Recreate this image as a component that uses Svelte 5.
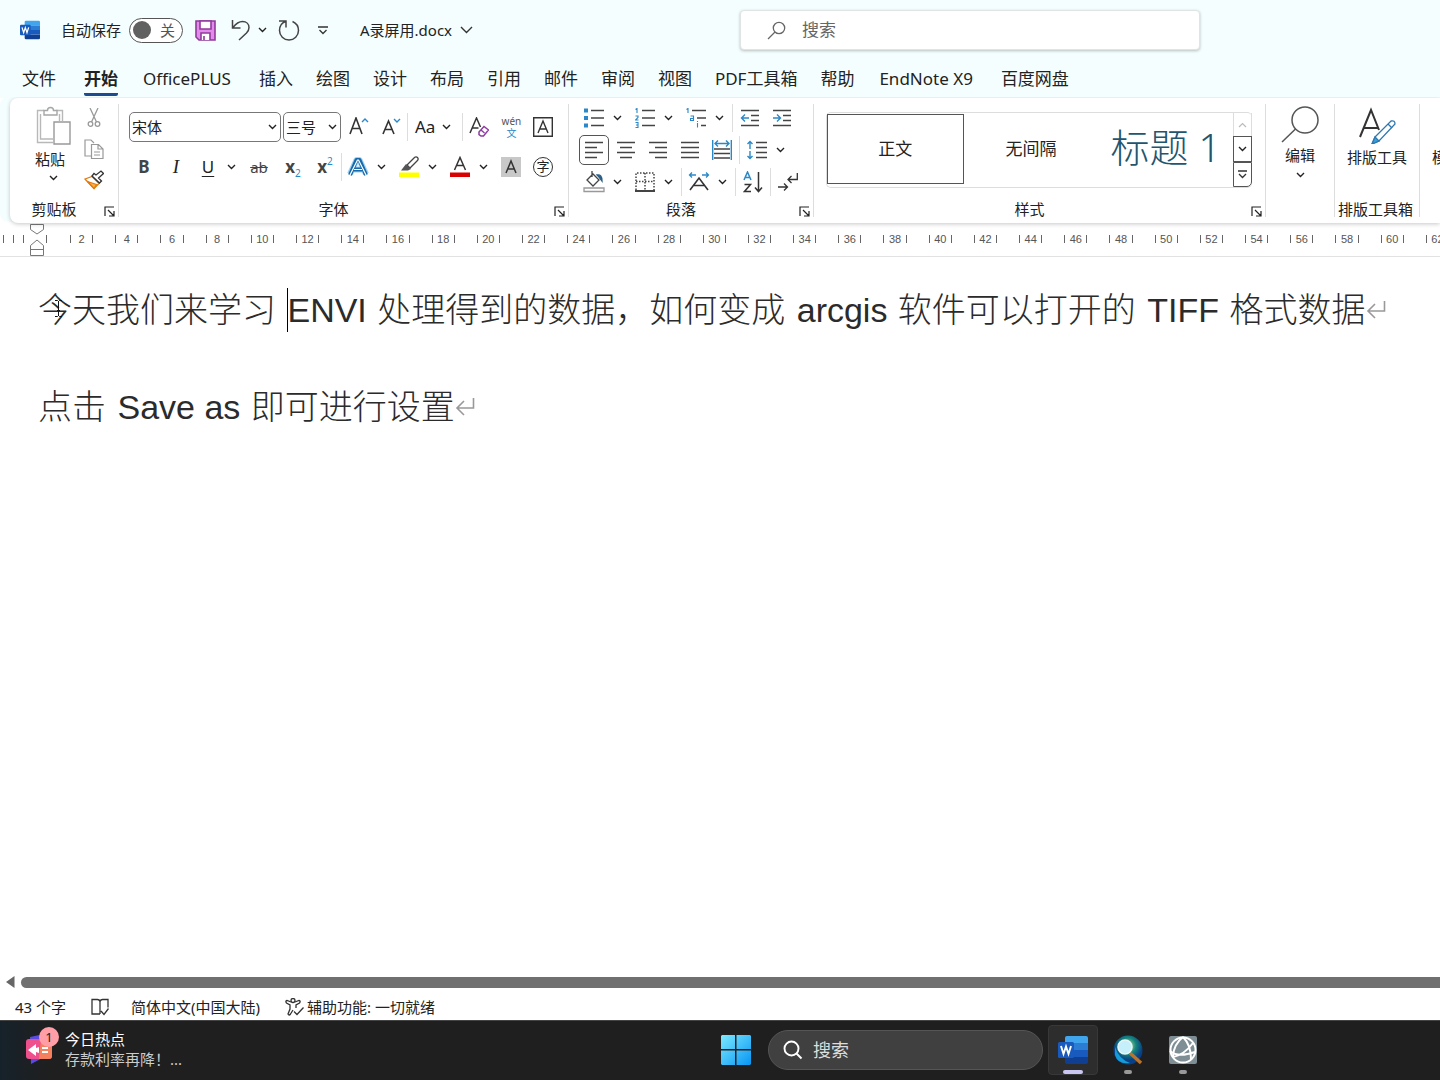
<script lang="ts">
	interface Tab {
		label: string;
		active?: boolean;
		latin?: boolean;
	}

	const tabs: Tab[] = [
		{ label: '文件' },
		{ label: '开始', active: true },
		{ label: 'OfficePLUS', latin: true },
		{ label: '插入' },
		{ label: '绘图' },
		{ label: '设计' },
		{ label: '布局' },
		{ label: '引用' },
		{ label: '邮件' },
		{ label: '审阅' },
		{ label: '视图' },
		{ label: 'PDF工具箱' },
		{ label: '帮助' },
		{ label: 'EndNote X9', latin: true },
		{ label: '百度网盘' }
	];

	const rulerMarks = Array.from({ length: 31 }, (_, i) => (i + 1) * 2);

	let autoSave = $state(false);
	let fontName = $state('宋体');
	let fontSize = $state('三号');
</script>

{#snippet chevron()}
	<svg class="chev" width="9" height="6" viewBox="0 0 9 6"><path d="M1 1l3.5 3.5L8 1" fill="none" stroke="currentColor" stroke-width="1.4" /></svg>
{/snippet}

{#snippet more(label: string)}
	<button type="button" class="more" aria-label={label}>{@render chevron()}</button>
{/snippet}

{#snippet launcher(label: string)}
	<button type="button" class="launcher" aria-label={label}>
		<svg width="11" height="11" viewBox="0 0 11 11" fill="none" stroke="#222" stroke-width="1.2"><path d="M1 10V1h9M4 4l5.500 5.500M10 5v5H5" /></svg>
	</button>
{/snippet}

{#snippet wordLogo(size: number)}
	<svg width={size} height={size} viewBox="0 0 30 30">
		<path d="M9 1h19q2 0 2 2v5H7V3q0-2 2-2z" fill="#41a5ee" />
		<path d="M7 8h23v7H7z" fill="#2b7cd3" />
		<path d="M7 15h23v7H7z" fill="#185abd" />
		<path d="M7 22h23v5q0 2-2 2H9q-2 0-2-2z" fill="#103f91" />
		<rect y="7" width="16" height="16" rx="1.500" fill="#185abd" />
		<path d="M3 11l2.500 8L8 11.500l2.500 7.500L13 11" fill="none" stroke="#fff" stroke-width="1.900" />
	</svg>
{/snippet}

<div class="app">
	<header class="titlebar">
		<span class="logo">{@render wordLogo(20)}</span>
		<label class="autosave">
			<span>自动保存</span>
			<input type="checkbox" bind:checked={autoSave} />
			<span class="switch" class:on={autoSave}><i></i>关</span>
		</label>
		<button type="button" class="save" aria-label="保存">
			<svg width="21" height="21" viewBox="0 0 21 21" fill="#e38bea" stroke="#8f3a9c" stroke-width="1.600"><path d="M1 1h19v19H4l-3-3z" /><path d="M5 1h11v8H5zM6 20v-7h9v7M9 16v4" fill="#fff" /></svg>
		</button>
		<button type="button" class="undo" aria-label="撤消">
			<svg width="20" height="21" viewBox="0 0 20 21" fill="none" stroke="#444" stroke-width="1.500"><path d="M1.500 0v8h8M2 7.500C5 3.500 8 1.500 11.500 1.500c4 0 6.500 2.500 6.500 6 0 2.500-1 4-2.500 5.500L8 20" /></svg>
		</button>
		{@render more('撤消选项')}
		<button type="button" class="redo" aria-label="重复">
			<svg width="22" height="22" viewBox="0 0 22 22" fill="none" stroke="#444" stroke-width="1.500"><path d="M1 2h7v6.500M7.500 2.500C3.500 4 1.500 7.500 1.500 11.500a9.500 9.500 0 0 0 19 0c0-4-2.500-7.500-6-9" /></svg>
		</button>
		<button type="button" class="customize" aria-label="自定义快速访问工具栏">
			<svg width="10" height="10" viewBox="0 0 10 10" fill="none" stroke="#333" stroke-width="1.300"><path d="M0 2h10M1.500 5L5 8.500 8.500 5" /></svg>
		</button>
		<button type="button" class="docname">
			A录屏用.docx
			<svg width="13" height="8" viewBox="0 0 13 8" fill="none" stroke="#333" stroke-width="1.400"><path d="M1 1l5.500 5.500L12 1" /></svg>
		</button>
		<label class="search">
			<svg width="19" height="19" viewBox="0 0 19 19" fill="none" stroke="#666" stroke-width="1.300"><circle cx="12" cy="7" r="5.700" /><path d="M8 11l-7 7" /></svg>
			<input type="text" placeholder="搜索" aria-label="搜索" />
		</label>
	</header>

	<nav class="tabs">
		{#each tabs as tab}
			<button type="button" class="tab" class:active={tab.active} class:wide={tab.latin}>{tab.label}</button>
		{/each}
	</nav>

	<div class="ribbon">
		<section class="group clipboard">
			<div class="body">
				<button type="button" class="paste">
					<svg width="36" height="40" viewBox="0 0 36 40" fill="none" stroke="#a6a6a6" stroke-width="1.400">
						<path d="M8 4.500H1.500v32H17M20 4.500h6.500V15M4.500 8v25H17M23.500 8v7" stroke="#b8b8b8" />
						<path d="M8 9V4.500h3.500a3 3 0 0 1 6 0H21V9z" fill="#fff" />
						<path d="M18 16h16v22H18z" fill="#fff" stroke="#999" />
					</svg>
					<span>粘贴</span>
					{@render chevron()}
				</button>
				<div class="stack">
					<button type="button" aria-label="剪切">
						<svg width="14" height="20" viewBox="0 0 14 20" fill="none" stroke="#999" stroke-width="1.300"><path d="M3 0l6.500 14M11 0L4.500 14" /><circle cx="3.500" cy="16" r="2.300" /><circle cx="10.500" cy="16" r="2.300" /></svg>
					</button>
					<button type="button" aria-label="复制">
						<svg width="20" height="20" viewBox="0 0 20 20" fill="#fff" stroke="#999" stroke-width="1.200"><path d="M7 17H1V1h6l3 3" /><path d="M7.500 5.500h7l4.500 4.500v9.500H7.500zM14 5.500V10h5M10 13h6M10 16h6" /></svg>
					</button>
					<button type="button" aria-label="格式刷">
						<svg width="20" height="20" viewBox="0 0 20 20" stroke-width="1.300"><path d="M1 9l7-2.500 7 7L10 18.500z" fill="#fff" stroke="#e07b12" /><path d="M3.500 11.500l9 3-2.500 4z" fill="#fbb040" stroke="#e07b12" /><path d="M8 6l7.500 7 2-2-3-3 5-4.500L17 1l-5 4-2-1.500z" fill="#fff" stroke="#333" /></svg>
					</button>
				</div>
			</div>
			<footer><span>剪贴板</span>{@render launcher('剪贴板')}</footer>
		</section>

		<section class="group font">
			<div class="body rows">
				<div class="row">
					<span class="combo name">
						<select bind:value={fontName} aria-label="字体"><option>宋体</option></select>
						{@render chevron()}
					</span>
					<span class="combo size">
						<select bind:value={fontSize} aria-label="字号"><option>三号</option></select>
						{@render chevron()}
					</span>
					<button type="button" class="cell" aria-label="增大字号">
						<svg width="20" height="20" viewBox="0 0 20 20" fill="none" stroke="#333" stroke-width="1.600"><path d="M1 17L7 1l6 16M3.500 11.500h7" /><path d="M13 5l3-3 3 3" stroke="#2b88c8" stroke-width="1.400" /></svg>
					</button>
					<button type="button" class="cell" aria-label="减小字号">
						<svg width="20" height="20" viewBox="0 0 20 20" fill="none" stroke="#333" stroke-width="1.600"><path d="M2 17L7.500 4 13 17M4 12.500h7" /><path d="M13 2l3 3 3-3" stroke="#2b88c8" stroke-width="1.400" /></svg>
					</button>
					<i class="sep"></i>
					<button type="button" class="case">Aa {@render chevron()}</button>
					<i class="sep"></i>
					<button type="button" class="cell" aria-label="清除所有格式">
						<svg width="20" height="20" viewBox="0 0 20 20" fill="none" stroke="#333" stroke-width="1.500"><path d="M1 16L7.500 1l4 9M3.500 11h6" /><path d="M10 15l5-5.500 4.500 3.500-5 6H12l-2-1.500zM12 13l3.500 3" stroke="#8d3da0" /></svg>
					</button>
					<button type="button" class="cell phonetic"><span>wén</span><small>文</small></button>
					<button type="button" class="cell" aria-label="字符边框">
						<svg width="20" height="20" viewBox="0 0 20 20" fill="none" stroke="#333" stroke-width="1.400"><path d="M.7.7h18.600v18.600H.7zM5 16l5-12 5 12M7 12h6" /></svg>
					</button>
				</div>
				<div class="row">
					<button type="button" class="cell bold">B</button>
					<button type="button" class="cell italic">I</button>
					<button type="button" class="cell underline">U</button>
					{@render more('下划线选项')}
					<i class="gap"></i>
					<button type="button" class="cell strike">ab</button>
					<button type="button" class="cell script">x<sub>2</sub></button>
					<button type="button" class="cell script">x<sup>2</sup></button>
					<i class="sep"></i>
					<button type="button" class="cell" aria-label="文本效果">
						<svg width="22" height="20" viewBox="0 0 22 20" fill="none" stroke-linejoin="round"><path d="M3 17L9.500 3h3L19 17M7 12.500h8" stroke="#9fd3f5" stroke-width="6" /><path d="M3 18L9.500 3h3L19 18M7 12.500h8" stroke="#1769aa" stroke-width="4" /><path d="M3 18L10.500 3h1L19 18M7 12.500h8" stroke="#fff" stroke-width="1.200" /></svg>
					</button>
					{@render more('文本效果选项')}
					<i class="gap"></i>
					<button type="button" class="cell" aria-label="突出显示">
						<svg width="20" height="22" viewBox="0 0 20 22"><path d="M0 16.500h20V21H0z" fill="#ff0" /><path d="M8 9l7-7q2-2 3.500-.500T18 5l-7 7z" fill="#fff" stroke="#444" stroke-width="1.300" /><path d="M7 8l5 5-3 1.500H2z" fill="#555" /></svg>
					</button>
					{@render more('突出显示颜色')}
					<i class="gap"></i>
					<button type="button" class="cell" aria-label="字体颜色">
						<svg width="20" height="22" viewBox="0 0 20 22"><path d="M0 16.500h20V21H0z" fill="#d80000" /><path d="M4.500 14L10 1.500 15.500 14M6.500 9.500h7" fill="none" stroke="#333" stroke-width="1.500" /></svg>
					</button>
					{@render more('字体颜色选项')}
					<i class="gap"></i>
					<button type="button" class="cell" aria-label="字符底纹">
						<svg width="20" height="20" viewBox="0 0 20 20"><path d="M0 0h20v20H0z" fill="#c8c8c8" /><path d="M5 16l5-12 5 12M7 12h6" fill="none" stroke="#333" stroke-width="1.500" /></svg>
					</button>
					<button type="button" class="cell"><span class="ring">字</span></button>
				</div>
			</div>
			<footer><span>字体</span>{@render launcher('字体')}</footer>
		</section>

		<section class="group paragraph">
			<div class="body rows">
				<div class="row">
					<button type="button" class="cell" aria-label="项目符号">
						<svg width="20" height="20" viewBox="0 0 20 20" stroke="#444" stroke-width="1.400"><path d="M7 2.500h13M7 10h13M7 17.500h13" /><path d="M0 .5h4v4H0zM0 8h4v4H0zM0 15.500h4v4H0z" fill="#2b88c8" stroke="none" /></svg>
					</button>
					{@render more('项目符号选项')}
					<i class="gap"></i>
					<button type="button" class="cell" aria-label="编号">
						<svg width="20" height="20" viewBox="0 0 20 20" stroke="#444" stroke-width="1.400" fill="none"><path d="M7 2.500h13M7 10h13M7 17.500h13" /><path d="M.5 1.500L2 .5V5M.5 8h2.500v1.500L.5 12H3.500M.5 14.500H3v5H.5M1 17h2" stroke="#2b88c8" stroke-width="1.100" /></svg>
					</button>
					{@render more('编号选项')}
					<i class="gap"></i>
					<button type="button" class="cell" aria-label="多级列表">
						<svg width="20" height="20" viewBox="0 0 20 20" stroke="#444" stroke-width="1.400" fill="none"><path d="M6 2.500h14M11 10h9M15 17.500h5" /><path d="M.5 1.500L2 .5V5M4.500 8h3v4.500h-3v-2h3M11.500 15v4.500M11.500 13v1" stroke="#2b88c8" stroke-width="1.100" /></svg>
					</button>
					{@render more('多级列表选项')}
					<i class="gap"></i>
					<i class="sep"></i>
					<button type="button" class="cell" aria-label="减少缩进量">
						<svg width="20" height="18" viewBox="0 0 20 18" stroke="#444" stroke-width="1.400" fill="none"><path d="M1 1.500h18M11 6.500h8M11 11.500h8M1 16.500h18" /><path d="M9 9H1.500M5 5.500L1.500 9 5 12.500" stroke="#2b88c8" /></svg>
					</button>
					<button type="button" class="cell" aria-label="增加缩进量">
						<svg width="20" height="18" viewBox="0 0 20 18" stroke="#444" stroke-width="1.400" fill="none"><path d="M1 1.500h18M11 6.500h8M11 11.500h8M1 16.500h18" /><path d="M1 9h7.500M5 5.500L8.500 9 5 12.500" stroke="#2b88c8" /></svg>
					</button>
				</div>
				<div class="row">
					<button type="button" class="cell pressed" aria-label="左对齐">
						<svg width="18" height="18" viewBox="0 0 18 18" stroke="#444" stroke-width="1.400"><path d="M0 1.500h18M0 6.500h12M0 11.500h18M0 16.500h12" /></svg>
					</button>
					<button type="button" class="cell" aria-label="居中">
						<svg width="18" height="18" viewBox="0 0 18 18" stroke="#444" stroke-width="1.400"><path d="M0 1.500h18M3 6.500h12M0 11.500h18M3 16.500h12" /></svg>
					</button>
					<button type="button" class="cell" aria-label="右对齐">
						<svg width="18" height="18" viewBox="0 0 18 18" stroke="#444" stroke-width="1.400"><path d="M0 1.500h18M6 6.500h12M0 11.500h18M6 16.500h12" /></svg>
					</button>
					<button type="button" class="cell" aria-label="两端对齐">
						<svg width="18" height="18" viewBox="0 0 18 18" stroke="#444" stroke-width="1.400"><path d="M0 1.500h18M0 6.500h18M0 11.500h18M0 16.500h18" /></svg>
					</button>
					<button type="button" class="cell" aria-label="分散对齐">
						<svg width="20" height="20" viewBox="0 0 20 20" stroke="#444" stroke-width="1.400" fill="none"><path d="M2 9h16M2 13.500h16M2 18h16" /><path d="M.7 0v20M19.300 0v20M3 3.500h14M6 .5l-3 3 3 3M14 .5l3 3-3 3" stroke="#2b88c8" /></svg>
					</button>
					<i class="sep"></i>
					<button type="button" class="cell" aria-label="行和段落间距">
						<svg width="20" height="20" viewBox="0 0 20 20" stroke="#444" stroke-width="1.400" fill="none"><path d="M9 2.500h11M9 7.500h11M9 12.500h11M9 17.500h11" /><path d="M3 1.500V9M.5 4L3 1.500 5.500 4M3 11v7.500M.5 16L3 18.500 5.500 16" stroke="#2b88c8" /></svg>
					</button>
					{@render more('行距选项')}
				</div>
				<div class="row">
					<button type="button" class="cell" aria-label="底纹">
						<svg width="22" height="22" viewBox="0 0 22 22" fill="none" stroke="#444" stroke-width="1.300"><path d="M4 9l6-6 6 6-6 6zM9 0v6" /><path d="M14 4q5-1 5 6l-3-4z" fill="#2b5f88" stroke="#2b5f88" /><path d="M1 17h20v3.500H1z" fill="#fff" stroke="#999" /></svg>
					</button>
					{@render more('底纹选项')}
					<i class="gap"></i>
					<button type="button" class="cell" aria-label="边框">
						<svg width="20" height="20" viewBox="0 0 20 20" fill="none" stroke="#444" stroke-width="1.500"><path d="M1 18V1h18v17M10 1v17M1 9.500h18" stroke-dasharray="1.500 1.500" /><path d="M0 19h20" stroke-width="2" /></svg>
					</button>
					{@render more('边框选项')}
					<i class="gap"></i>
					<i class="sep"></i>
					<button type="button" class="cell" aria-label="中文版式">
						<svg width="22" height="20" viewBox="0 0 22 20" fill="none" stroke="#333" stroke-width="1.600"><path d="M2 18L11 6l9 12M5.500 13.500h11" /><path d="M8 3H1.500M4 .5L1.500 3 4 5.500M14 3h6.500M18 .5L20.500 3 18 5.500" stroke="#2b88c8" stroke-width="1.300" /></svg>
					</button>
					{@render more('中文版式选项')}
					<i class="gap"></i>
					<i class="sep"></i>
					<button type="button" class="cell" aria-label="排序">
						<svg width="20" height="22" viewBox="0 0 20 22" fill="none" stroke="#333" stroke-width="1.500"><path d="M1 9l3.500-8L8 9M2 6.500h5" stroke="#2b88c8" /><path d="M1.500 13.500h6l-6 7h6.500M15.500 1v19M12 16.500l3.500 4 3.500-4" /></svg>
					</button>
					<i class="sep"></i>
					<button type="button" class="cell" aria-label="显示编辑标记">
						<svg width="20" height="20" viewBox="0 0 20 20" fill="none" stroke="#333" stroke-width="1.300"><path d="M19.300 1v6.500H10M13.500 4L10 7.500l3.500 3.500M0 15h9.500M6 11.500L9.500 15 6 18.500" /></svg>
					</button>
				</div>
			</div>
			<footer><span>段落</span>{@render launcher('段落')}</footer>
		</section>

		<section class="group styles">
			<div class="body">
				<div class="gallery">
					<button type="button" class="style current">正文</button>
					<button type="button" class="style">无间隔</button>
					<button type="button" class="style heading">标题 1</button>
					<div class="scroller">
						<button type="button" class="dim" aria-label="上一行">
							<svg width="9" height="6" viewBox="0 0 9 6" fill="none" stroke="#bbb" stroke-width="1.200"><path d="M1 5l3.500-3.500L8 5" /></svg>
						</button>
						<button type="button" aria-label="下一行">{@render chevron()}</button>
						<button type="button" aria-label="其他样式">
							<svg width="9" height="9" viewBox="0 0 9 9" fill="none" stroke="#333" stroke-width="1.300"><path d="M0 1h9M1 4l3.500 3.500L8 4" /></svg>
						</button>
					</div>
				</div>
			</div>
			<footer><span>样式</span>{@render launcher('样式')}</footer>
		</section>

		<section class="group editing">
			<div class="body">
				<button type="button" class="big">
					<svg width="38" height="37" viewBox="0 0 38 37" fill="none" stroke="#555" stroke-width="1.500"><circle cx="24" cy="14" r="13" /><path d="M14.500 23L1 36" /></svg>
					<span>编辑</span>
					{@render chevron()}
				</button>
			</div>
			<footer></footer>
		</section>

		<section class="group tools">
			<div class="body">
				<button type="button" class="big typeset">
					<svg width="38" height="38" viewBox="0 0 38 38" fill="none" stroke="#333" stroke-width="2"><path d="M2 31L13 4l8 20M6 22h14" /><path d="M17 31L33 15q4-1 4 3L21 35l-7 3z" fill="#fff" stroke="#2f78ad" stroke-width="1.300" /><path d="M17 31l4 4-7 3z" fill="#3aa0dc" stroke="#2f78ad" stroke-width="1.300" /><path d="M30 18l4 4" stroke="#2f78ad" stroke-width="1.300" /></svg>
					<span>排版工具</span>
				</button>
			</div>
			<footer><span>排版工具箱</span></footer>
		</section>

		<section class="group next">
			<div class="body">
				<button type="button" class="big"><span>模板</span></button>
			</div>
		</section>
	</div>

	<div class="ruler">
		<div class="indent">
			<i></i><i></i><i></i>
			<svg width="15" height="34" viewBox="0 0 15 34" fill="#fff" stroke="#777" stroke-width="1"><path d="M1.500 2.500h13v5L8 12 1.500 7.500zM8 18l6.500 5.500V33.500h-13V23.500zM1.500 27.500h13" /></svg>
			<i></i>
		</div>
		<div class="scale">
			{#each rulerMarks as mark}
				<span class="mark">{mark}</span>
			{/each}
		</div>
	</div>

	{#snippet paragraphMark()}<svg class="pmark" width="20" height="20" viewBox="0 0 20 20" fill="none" stroke="#999" stroke-width="1.600"><path d="M18.500 1v10H2M9 4l-7 7 7 7" /></svg>{/snippet}

	<main class="page">
		<p>今天我们来学习 <span class="latin"><i class="caret"></i>ENVI</span> 处理得到的数据，如何变成 <span class="latin">arcgis</span> 软件可以打开的 <span class="latin">TIFF</span> 格式数据{@render paragraphMark()}</p>
		<p>点击 <span class="latin">Save as</span> 即可进行设置{@render paragraphMark()}</p>
		<svg class="pointer" width="9" height="17" viewBox="0 0 9 17" fill="none" stroke="#111"><path d="M1 .5h2.500l1 1 1-1H8M4.500 1v15M1 16.500h2.500l1-1 1 1H8M3 10.500h3" /></svg>
	</main>

	<div class="hscroll">
		<svg width="9" height="12" viewBox="0 0 9 12"><path d="M8.500 0v12L0 6z" fill="#666" /></svg>
		<div class="thumb"></div>
	</div>

	<div class="status">
		<span>43 个字</span>
		<svg width="18" height="18" viewBox="0 0 18 18" fill="none" stroke="#333" stroke-width="1.300"><path d="M9 16H1V1.500h5.500q2 0 2.500 2 .5-2 2.500-2H17v8M9 3v13M10 13l3 3.500 4.500-6" /></svg>
		<span class="lang">简体中文(中国大陆)</span>
		<svg class="access" width="20" height="18" viewBox="0 0 20 18" fill="none" stroke="#333" stroke-width="1.300"><circle cx="8" cy="2.500" r="2" /><path d="M6 4L2 2.500Q0 3 1.500 5L5 7v4l-2 5q1 2 2.500 0L8 12M10 4l4-1.500q2 .5.500 2.500L11 7v3M9 13.500l3 3 6.500-7" /></svg>
		<span>辅助功能: 一切就绪</span>
	</div>

	<footer class="taskbar">
		<button type="button" class="widget">
			<span class="news">
				<svg width="30" height="32" viewBox="0 0 30 32"><path d="M6 4l14-3 6 20-19 10z" fill="#5b4be0" /><rect x="2" y="6" width="26" height="20" rx="3" fill="#ee4f8d" /><path d="M17 6h8q3 0 3 3v14q0 3-3 3H15z" fill="#f5805e" /><path d="M4 17l8-6v12zM12 15l3-1v6l-3-1M18 14h6v2h-6zM18 18h6v2h-6z" fill="#fff" /></svg>
				<b>1</b>
			</span>
			<span class="lines"><strong>今日热点</strong><span>存款利率再降！...</span></span>
		</button>
		<div class="dock">
			<button type="button" class="start" aria-label="开始">
				<svg width="30" height="30" viewBox="0 0 30 30"><defs><linearGradient id="win" x2="1" y2="1"><stop stop-color="#7ceaff" /><stop offset="1" stop-color="#0795f3" /></linearGradient></defs><path d="M1 0h13v14H0V1zM15.500 0H29l1 1v13H15.500zM0 15.500h14V30H1l-1-1zM15.500 15.500H30V29l-1 1H15.500z" fill="url(#win)" /></svg>
			</button>
			<label class="find">
				<svg width="20" height="20" viewBox="0 0 20 20" fill="none" stroke="#fff" stroke-width="1.900"><circle cx="8.500" cy="8.500" r="7" /><path d="M13.500 13.500l5 5" /></svg>
				<input type="text" placeholder="搜索" aria-label="搜索应用" />
			</label>
			<button type="button" class="task current" aria-label="Word">{@render wordLogo(30)}<i></i></button>
			<button type="button" class="task" aria-label="ArcMap">
				<svg width="30" height="30" viewBox="0 0 30 30"><defs><radialGradient id="globe" cx=".5" cy=".35"><stop stop-color="#b7ed9a" /><stop offset=".55" stop-color="#15857c" /><stop offset="1" stop-color="#093f86" /></radialGradient></defs><circle cx="15" cy="15" r="14.500" fill="url(#globe)" /><path d="M2 12q4 12 15 16Q5 30 2 20z" fill="#159cd8" /><path d="M17 18l11 10" stroke="#b8732d" stroke-width="3.500" /><circle cx="12" cy="12" r="7" fill="#c5effa" stroke="#e9f4f4" stroke-width="1.600" /></svg>
				<i></i>
			</button>
			<button type="button" class="task" aria-label="ENVI">
				<svg width="30" height="30" viewBox="0 0 30 30"><rect x="1" y="1" width="28" height="28" rx="2" fill="#7f8e95" /><g fill="none" stroke="#fff" stroke-width="2"><circle cx="15" cy="15" r="12.500" /><path d="M15 2Q6 9 5 21M15 2q8 8 8 22M2 16q8 7 25 1M5 22Q16 20 25 8" /></g></svg>
				<i></i>
			</button>
		</div>
	</footer>
</div>

<style>
	:global(body) {
		margin: 0;
		overflow: hidden;
	}

	.app {
		display: flex;
		flex-direction: column;
		min-height: 100vh;
		overflow: hidden;
		background: #fff;
		color: #222;
		font-family: 'Noto Sans', 'Noto Sans CJK SC', sans-serif;
		font-size: 15px;
		line-height: 20px;
	}

	button,
	input,
	select {
		margin: 0;
		padding: 0;
		border: 0;
		background: none;
		color: inherit;
		font: inherit;
	}

	svg {
		display: block;
		flex: none;
	}

	/* Title bar */
	.titlebar {
		display: flex;
		align-items: center;
		height: 60px;
		padding-left: 20px;
		background: #f5fefe;
	}

	.titlebar > * {
		flex: none;
	}

	.autosave {
		display: flex;
		align-items: center;
		gap: 8px;
		margin-left: 21px;
	}

	.autosave input {
		position: absolute;
		opacity: 0;
	}

	.switch {
		display: flex;
		align-items: center;
		justify-content: space-between;
		box-sizing: border-box;
		width: 54px;
		height: 25px;
		padding: 0 7px 0 3px;
		border: 1px solid #555;
		border-radius: 13px;
		background: #fff;
		color: #555;
	}

	.switch i {
		width: 18px;
		height: 18px;
		border-radius: 50%;
		background: #616161;
	}

	.switch.on {
		flex-direction: row-reverse;
	}

	.save {
		margin-left: 12px;
	}

	.undo {
		margin: 0 4px 0 15px;
	}

	.redo {
		margin-left: 9px;
	}

	.customize {
		margin-left: 18px;
	}

	.docname {
		display: flex;
		align-items: center;
		gap: 8px;
		margin-left: 32px;
	}

	.search {
		display: flex;
		align-items: center;
		gap: 16px;
		box-sizing: border-box;
		width: 460px;
		height: 40px;
		margin-left: auto;
		margin-right: 240px;
		padding: 0 26px;
		border: 1px solid #dfe5e5;
		border-radius: 4px;
		background: #fff;
		box-shadow: 0 1px 3px #00000040;
		font-size: 17px;
	}

	.search input {
		flex: 1;
		min-width: 0;
		outline: none;
	}

	.search input::placeholder {
		color: #666;
		opacity: 1;
	}

	/* Tabs */
	.tabs {
		display: flex;
		gap: 23px;
		height: 38px;
		padding-left: 22px;
		background: #f5fefe;
		font-size: 17px;
		line-height: 38px;
		white-space: nowrap;
	}

	.tab {
		display: flex;
		height: 38px;
	}

	.tab:first-child {
		margin-right: 5px;
	}

	.tab.wide {
		margin: 0 5px 0 2px;
	}

	.tab.active {
		box-sizing: border-box;
		height: 36px;
		border-bottom: 3px solid #1e4b8f;
		border-radius: 2px;
		font-weight: 700;
	}

	/* Ribbon */
	.ribbon {
		display: flex;
		height: 125px;
		margin-left: 10px;
		border-radius: 8px 0 0 8px;
		background: #fff;
		box-shadow: 0 1px 4px #00000038, -10px -1px 0 0 #f5feff;
		clip-path: inset(-1px 0 -5px -10px);
	}

	.group {
		display: flex;
		flex: none;
		flex-direction: column;
		box-sizing: border-box;
		height: 113px;
		margin-top: 6px;
		border-right: 1px solid #ddd;
	}

	.group .body {
		display: flex;
		flex: 1;
	}

	.group > footer {
		display: flex;
		align-items: center;
		gap: 6px;
		height: 20px;
		margin-bottom: -2px;
		padding-right: 3px;
	}

	.group > footer span {
		flex: 1;
		text-align: center;
		white-space: nowrap;
	}

	.launcher {
		padding-top: 4px;
	}

	.row {
		display: flex;
		align-items: center;
	}

	.cell {
		display: flex;
		align-items: center;
		justify-content: center;
		flex: none;
		width: 32px;
		height: 30px;
	}

	.more {
		display: flex;
		align-items: center;
		justify-content: center;
		width: 14px;
		height: 30px;
	}

	.gap {
		width: 5px;
	}

	.sep {
		flex: none;
		width: 1px;
		height: 28px;
		background: #ddd;
	}

	.clipboard {
		width: 109px;
	}

	.clipboard .body {
		gap: 9px;
		padding: 2px 0 0 23px;
	}

	.paste,
	.big {
		display: flex;
		flex-direction: column;
		align-items: center;
	}

	.paste {
		gap: 3px;
		width: 41px;
	}

	.paste .chev {
		margin-top: 3px;
	}

	.paste span {
		margin-left: -7px;
	}

	.stack {
		display: flex;
		flex-direction: column;
		gap: 11px;
		padding-top: 2px;
	}

	.stack button {
		display: flex;
		justify-content: center;
		width: 22px;
		height: 20px;
	}

	.font {
		width: 450px;
	}

	.font .body {
		flex-direction: column;
		gap: 10px;
		padding: 8px 0 0 9px;
	}

	.combo {
		display: grid;
		align-items: center;
		box-sizing: border-box;
		height: 30px;
		border: 1px solid #777;
		border-radius: 5px;
	}

	.combo select,
	.combo .chev {
		grid-area: 1 / 1;
	}

	.combo select {
		appearance: none;
		width: 100%;
		padding-left: 2px;
	}

	.combo .chev {
		justify-self: end;
		margin-right: 3px;
		pointer-events: none;
	}

	.combo.name {
		width: 152px;
		margin: 0 2px 0 1px;
	}

	.combo.size {
		width: 58px;
		margin-right: 2px;
	}

	.case {
		display: flex;
		align-items: center;
		gap: 7px;
		margin: 0 11px 0 7px;
		font-size: 17px;
	}

	.phonetic {
		flex-direction: column;
		gap: 3px;
		font-size: 10px;
		line-height: 9px;
		color: #555;
	}

	.phonetic small {
		font-size: 10px;
		color: #2b88c8;
	}

	.bold,
	.script {
		font-size: 17px;
		font-weight: 700;
		color: #444;
	}

	.italic {
		font-family: 'Liberation Serif', serif;
		font-size: 19px;
		font-style: italic;
	}

	.underline {
		font-size: 17px;
		text-decoration: underline;
		text-underline-offset: 3px;
	}

	.strike {
		margin-right: 2px;
		color: #444;
		text-decoration: line-through;
	}

	.script {
		height: 22px;
	}

	.script sub,
	.script sup {
		font-size: 10px;
		font-weight: 400;
		line-height: 10px;
		color: #2b88c8;
	}

	.script sub {
		align-self: flex-end;
	}

	.script sup {
		align-self: flex-start;
	}

	.ring {
		box-sizing: border-box;
		width: 20px;
		height: 20px;
		border: 1px solid #333;
		border-radius: 50%;
		font-size: 13px;
		line-height: 17px;
	}

	.paragraph {
		width: 245px;
	}

	.paragraph .body {
		flex-direction: column;
		gap: 4px;
		padding: 0 0 0 9px;
	}

	.paragraph .row {
		height: 28px;
	}

	.paragraph .sep {
		margin: 0 1px;
	}

	.pressed {
		box-sizing: border-box;
		width: 30px;
		margin: 0 1px;
		border: 1px solid #555;
		border-radius: 5px;
	}

	.styles {
		width: 452px;
	}

	.styles .body {
		align-items: flex-start;
		padding: 8px 13px 0 12px;
	}

	.gallery {
		display: flex;
		flex: 1;
		height: 74px;
		border: 1px solid #ddd;
		border-right: 0;
		border-radius: 5px;
	}

	.style {
		box-sizing: border-box;
		flex: 1 1 0;
		height: 70px;
		margin-top: 1px;
		font-size: 17px;
		white-space: nowrap;
	}

	.style.current {
		border: 1px solid #555;
	}

	.style.heading {
		padding-bottom: 5px;
		color: #22566f;
		font-size: 39px;
		font-weight: 300;
		line-height: 60px;
	}

	.scroller {
		display: flex;
		flex-direction: column;
		width: 19px;
	}

	.scroller button {
		display: flex;
		align-items: center;
		justify-content: center;
		flex: 1;
		box-sizing: border-box;
		border: 1px solid #555;
	}

	.scroller .dim {
		border-color: #ddd;
		border-top: 0;
		border-bottom: 0;
	}

	.scroller button:last-child {
		border-radius: 0 0 5px 0;
	}

	.editing {
		width: 69px;
	}

	.editing .body,
	.tools .body,
	.next .body {
		justify-content: center;
		padding-top: 2px;
	}

	.big {
		gap: 2px;
		white-space: nowrap;
	}

	.big .chev {
		margin-top: 5px;
	}

	.tools {
		width: 85px;
	}

	.typeset {
		gap: 3px;
	}

	.next {
		width: 54px;
		border: 0;
	}

	.next .big {
		padding-top: 41px;
	}

	/* Ruler */
	.ruler {
		display: flex;
		align-items: center;
		box-sizing: border-box;
		height: 34px;
		padding-bottom: 1px;
		border-bottom: 1px solid #e2e2e2;
		color: #555;
		font-family: 'Liberation Sans', sans-serif;
		font-size: 11px;
	}

	.indent {
		display: flex;
		align-items: center;
		gap: 9px;
		box-sizing: border-box;
		width: 59px;
		padding-left: 3px;
	}

	.indent svg {
		margin: 0 -7px 0 -4px;
	}

	.indent i {
		width: 1px;
		height: 8px;
		background: #666;
	}

	.scale {
		display: grid;
		flex: 1;
		grid-template-columns: repeat(31, 1fr);
		margin-right: -20px;
	}

	.mark {
		display: flex;
		align-items: center;
		justify-content: space-between;
		padding: 0 11px;
	}

	.mark::before,
	.mark::after {
		width: 1px;
		height: 8px;
		background: #666;
		content: '';
	}

	/* Document */
	.page {
		position: relative;
		flex: 1;
		padding: 29px 38px;
		color: #2b2b2b;
		font-family: 'Liberation Sans', 'Noto Sans CJK SC', sans-serif;
		font-size: 34px;
		font-weight: 300;
		line-height: 49px;
		white-space: nowrap;
	}

	.page p {
		margin: 0 0 48px;
	}

	.latin {
		position: relative;
		margin: 0 1px 0 2px;
	}

	.caret {
		position: absolute;
		top: -3px;
		left: 0;
		width: 1px;
		height: 44px;
		background: #000;
	}

	.pmark {
		display: inline-block;
		vertical-align: 2px;
	}

	.pointer {
		position: absolute;
		top: 43px;
		left: 54px;
	}

	.hscroll {
		display: flex;
		align-items: center;
		gap: 6px;
		height: 12px;
		padding-left: 6px;
	}

	.thumb {
		flex: 1;
		height: 11px;
		border-radius: 6px 0 0 6px;
		background: #707070;
	}

	/* Status bar */
	.status {
		display: flex;
		align-items: center;
		height: 32px;
		padding: 5px 15px 0;
		box-sizing: border-box;
	}

	.status svg {
		margin: 0 22px 0 25px;
	}

	.status .access {
		margin: 0 2px 0 25px;
	}

	/* Taskbar */
	.taskbar {
		display: flex;
		height: 60px;
		border-top: 1px solid #444;
		box-sizing: border-box;
		background: linear-gradient(90deg, #16222a, #1f1f1f 50px);
		color: #fff;
	}

	.widget {
		display: flex;
		align-items: center;
		gap: 11px;
		width: 50%;
		padding: 0 0 3px 24px;
		text-align: left;
	}

	.news {
		position: relative;
	}

	.news b {
		position: absolute;
		top: -6px;
		right: -5px;
		width: 20px;
		height: 20px;
		border-radius: 50%;
		background: #ff9ea6;
		color: #222;
		font-size: 13px;
		font-weight: 400;
		text-align: center;
	}

	.lines {
		display: flex;
		flex-direction: column;
		color: #ccc;
	}

	.lines strong {
		color: #fff;
		font-weight: 400;
	}

	.dock {
		display: flex;
		align-items: center;
		padding: 0 0 2px 1px;
	}

	.find {
		display: flex;
		align-items: center;
		gap: 10px;
		box-sizing: border-box;
		width: 275px;
		height: 40px;
		margin: 0 5px 0 17px;
		padding: 0 14px;
		border: 1px solid #555;
		border-radius: 20px;
		background: #404040;
		font-size: 18px;
	}

	.find input {
		flex: 1;
		min-width: 0;
		outline: none;
	}

	.find input::placeholder {
		color: #ddd;
		opacity: 1;
	}

	.task {
		display: flex;
		flex-direction: column;
		align-items: center;
		gap: 5px;
		box-sizing: border-box;
		width: 50px;
		height: 50px;
		margin-right: 5px;
		padding-top: 10px;
		border-radius: 4px;
	}

	.task.current {
		border: 1px solid #383838;
		background: #2d2d2d;
		padding-top: 9px;
	}

	.task i {
		width: 8px;
		height: 4px;
		border-radius: 2px;
		background: #999;
	}

	.task.current i {
		width: 20px;
		background: #c9c6f2;
	}
</style>
